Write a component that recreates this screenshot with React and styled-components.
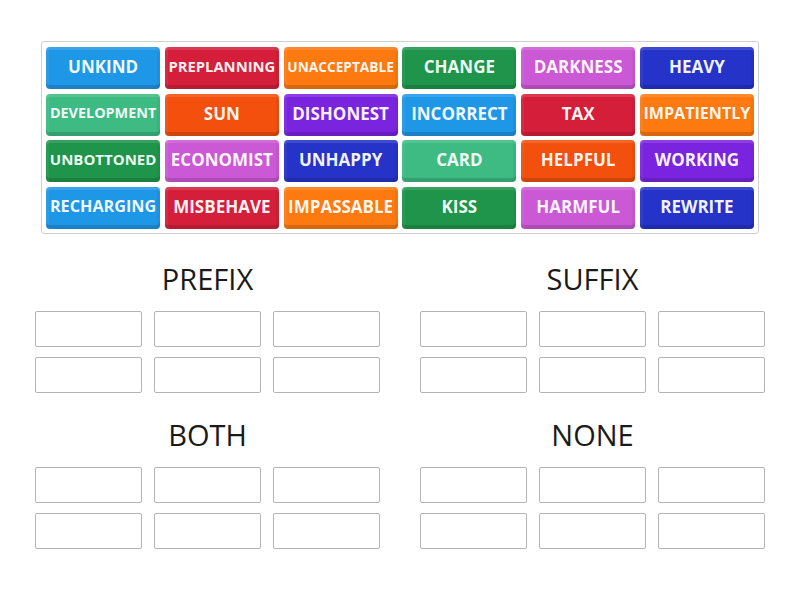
import React, { useLayoutEffect, useRef, useState } from 'react';
import styled, { createGlobalStyle } from 'styled-components';

const GlobalStyle = createGlobalStyle`
  body {
    margin: 0;
    background: #fff;
    font-family: "Open Sans", "DejaVu Sans", sans-serif;
  }
`;

const COLORS = {
    blue: '#1f97e7',
    red: '#d51f3a',
    orange: '#fc7a10',
    green: '#1e954b',
    pink: '#cb58d4',
    navy: '#2533c8',
    mint: '#3dbb83',
    flame: '#f2500c',
    purple: '#7b24df',
};

const WORDS = [
    ['UNKIND', 'blue'], ['PREPLANNING', 'red'], ['UNACCEPTABLE', 'orange'],
    ['CHANGE', 'green'], ['DARKNESS', 'pink'], ['HEAVY', 'navy'],
    ['DEVELOPMENT', 'mint'], ['SUN', 'flame'], ['DISHONEST', 'purple'],
    ['INCORRECT', 'blue'], ['TAX', 'red'], ['IMPATIENTLY', 'orange'],
    ['UNBOTTONED', 'green'], ['ECONOMIST', 'pink'], ['UNHAPPY', 'navy'],
    ['CARD', 'mint'], ['HELPFUL', 'flame'], ['WORKING', 'purple'],
    ['RECHARGING', 'blue'], ['MISBEHAVE', 'red'], ['IMPASSABLE', 'orange'],
    ['KISS', 'green'], ['HARMFUL', 'pink'], ['REWRITE', 'navy'],
];

const GROUPS = ['PREFIX', 'SUFFIX', 'BOTH', 'NONE'];

const MAX_SIZE = 17;
const MAX_TEXT = 107;

// shrink long words so they fit the tile
function Tile({ word, color }) {
    const ref = useRef(null);
    const [size, setSize] = useState(MAX_SIZE);

    useLayoutEffect(() => {
        const w = ref.current.getBoundingClientRect().width;
        if (w > MAX_TEXT) setSize(Math.floor((MAX_SIZE * MAX_TEXT / w) * 10) / 10);
    }, []);

    return (
        <TileBox $color={COLORS[color]}>
            <Label ref={ref} style={{ fontSize: size }}>{word}</Label>
        </TileBox>
    );
}

function Zone({ title }) {
    return (
        <ZoneBox>
            <ZoneTitle>{title}</ZoneTitle>
            <Slots>
                {Array.from({ length: 6 }).map((_, i) => <Slot key={i}/>)}
            </Slots>
        </ZoneBox>
    );
}

export default function App() {
    return (
        <Page>
            <GlobalStyle/>
            <Board>
                {WORDS.map(([word, color]) => <Tile key={word} word={word} color={color}/>)}
            </Board>
            <Zones>
                {GROUPS.map(g => <Zone key={g} title={g}/>)}
            </Zones>
        </Page>
    );
}

const Page = styled.div`
  width: 800px;
  height: 600px;
  padding-top: 41px;
  box-sizing: border-box;
`;

const Board = styled.div`
  width: 718px;
  margin-left: 41px;
  box-sizing: border-box;
  border: 1px solid #cfcfcf;
  border-radius: 3px;
  padding: 5px 4px 4px;
  display: grid;
  grid-template-columns: repeat(6, 1fr);
  grid-auto-rows: 42px;
  column-gap: 4.6px;
  row-gap: 4.7px;
`;

const TileBox = styled.div`
  display: flex;
  align-items: center;
  justify-content: center;
  padding-bottom: 3px;
  box-sizing: border-box;
  border-radius: 4px;
  background: ${p => p.$color};
  box-shadow:
    inset 0 3px 0 rgba(255, 255, 255, 0.12),
    inset 3px 0 0 rgba(255, 255, 255, 0.05),
    inset -3px 0 0 rgba(0, 0, 0, 0.04),
    inset 0 -4px 0 rgba(0, 0, 0, 0.14);
  overflow: hidden;
`;

const Label = styled.span`
  display: inline-block;
  white-space: nowrap;
  font-weight: 700;
  color: rgba(255, 255, 255, 0.94);
  line-height: 1;
`;

const Zones = styled.div`
  width: 730px;
  margin: 28px 0 0 35px;
  display: grid;
  grid-template-columns: 1fr 1fr;
  column-gap: 40px;
  row-gap: 25px;
`;

const ZoneBox = styled.div`
  display: flex;
  flex-direction: column;
`;

const ZoneTitle = styled.div`
  font-size: 29px;
  line-height: 34px;
  text-align: center;
  color: #1a1a1a;
  margin-bottom: 15px;
`;

const Slots = styled.div`
  display: grid;
  grid-template-columns: repeat(3, 1fr);
  grid-auto-rows: 36px;
  column-gap: 11.5px;
  row-gap: 10px;
`;

const Slot = styled.div`
  border: 1px solid #b4b4b4;
  border-radius: 2px;
  background: #fff;
`;
